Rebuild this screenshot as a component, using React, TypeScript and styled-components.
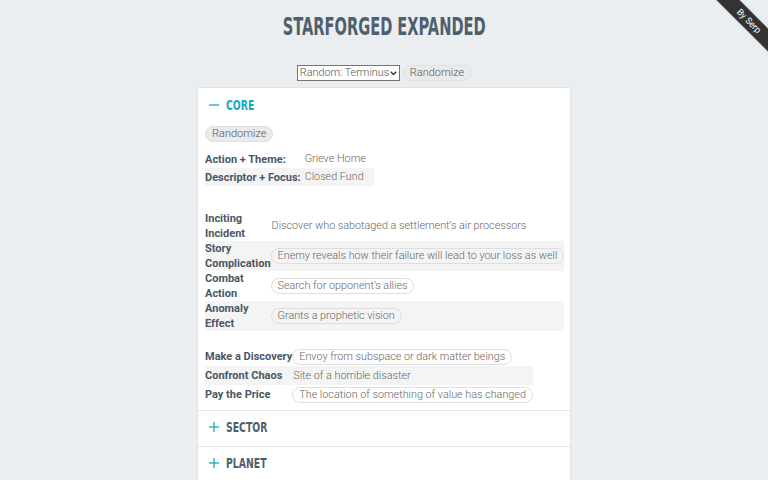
import styled, { createGlobalStyle } from "styled-components";

const GlobalStyle = createGlobalStyle`
  html, body {
    margin: 0;
    padding: 0;
    background: #ebeef1;
    font-family: Roboto, "Liberation Sans", sans-serif;
    overflow: hidden;
  }
`;

const Page = styled.div`
  position: relative;
  width: 768px;
  height: 480px;
  overflow: hidden;
  display: flex;
  flex-direction: column;
  align-items: center;
`;

const Title = styled.h1`
  margin: 15px 0 0;
  height: 24px;
  font-family: "DejaVu Sans Condensed", sans-serif;
  font-weight: 700;
  font-size: 25px;
  line-height: 24px;
  color: #4f5f6d;
  letter-spacing: 0;
  transform: scaleX(0.65);
`;

const Toolbar = styled.div`
  margin-top: 26px;
  display: flex;
  align-items: center;
  gap: 3px;
`;

const SelectWrap = styled.div`
  position: relative;
  display: flex;
`;

const Select = styled.select`
  appearance: none;
  -webkit-appearance: none;
  height: 16px;
  width: 103px;
  padding: 0 9px 0 2px;
  font-family: Roboto, sans-serif;
  font-weight: 300;
  font-size: 10.8px;
  line-height: 14px;
  color: #555;
  border: 1px solid #767676;
  border-radius: 0;
  background: #fff;
`;

const Chevron = styled.svg`
  position: absolute;
  right: 3px;
  top: 6px;
  pointer-events: none;
`;

const PillButton = styled.button`
  height: 16px;
  padding: 0 6px;
  font-family: Roboto, sans-serif;
  font-weight: 300;
  font-size: 11px;
  line-height: 14px;
  color: #555;
  background: #ebebeb;
  border: 1px solid #e0e0e0;
  border-radius: 8px;
`;

const Card = styled.div`
  margin-top: 6px;
  width: 372px;
  background: #fff;
  border: 1px solid #dfe3e7;
  border-bottom: none;
`;

const Section = styled.section<{ $last?: boolean }>`
  border-bottom: ${(p) => (p.$last ? "none" : "1px solid #e3e6ea")};
`;

const Header = styled.div<{ $open?: boolean }>`
  height: ${(p) => (p.$open ? 34 : 35)}px;
  box-sizing: border-box;
  padding-bottom: ${(p) => (p.$open ? 0 : 3)}px;
  display: flex;
  align-items: center;
  gap: 7px;
  padding-left: 11px;
  color: ${(p) => (p.$open ? "#17a9bd" : "#4f5f6d")};
`;

const HeaderText = styled.span`
  display: inline-block;
  font-family: "DejaVu Sans Condensed", sans-serif;
  font-weight: 700;
  font-size: 14px;
  line-height: 16px;
  transform: scaleX(0.74);
  transform-origin: left center;
`;

const Body = styled.div`
  padding: 0 7px 6px 7px;
`;

const Table = styled.table<{ $mt?: number }>`
  border-collapse: collapse;
  margin-top: ${(p) => p.$mt ?? 0}px;
  font-size: 11px;
`;

const Row = styled.tr<{ $shade?: boolean; $h?: number }>`
  background: ${(p) => (p.$shade ? "#f4f4f4" : "transparent")};
  height: ${(p) => p.$h ?? 18}px;
`;

const Label = styled.td<{ $w?: number; $pr?: number }>`
  padding: 0 ${(p) => p.$pr ?? 0}px 0 0;
  width: ${(p) => (p.$w ? `${p.$w}px` : "auto")};
  font-weight: 700;
  color: #4a5866;
  line-height: 15px;
  vertical-align: middle;
  white-space: ${(p) => (p.$w ? "normal" : "nowrap")};
`;

const Value = styled.td`
  padding: 0;
  font-weight: 300;
  font-size: 10.8px;
  color: #666;
  white-space: nowrap;
  vertical-align: middle;
`;

const Plain = styled.span`
  display: inline-block;
  padding: 0 8px 0 1px;
  line-height: 14px;
`;

const Chip = styled.span`
  display: inline-block;
  padding: 0 6px;
  line-height: 14px;
  border: 1px solid #dedede;
  border-radius: 8px;
`;

const Ribbon = styled.div`
  position: absolute;
  top: 13px;
  right: -36px;
  width: 110px;
  height: 16px;
  background: #333;
  color: #fff;
  font-family: Roboto, sans-serif;
  font-size: 9px;
  line-height: 16px;
  text-align: center;
  transform: rotate(45deg);
  box-shadow: 0 0 2px rgba(0, 0, 0, 0.4);
`;

const IconBox = styled.span`
  display: flex;
  color: #17a9bd;
`;

const Icon = ({ plus }: { plus?: boolean }) => (
  <IconBox>
    <svg width="10" height="10" viewBox="0 0 10 10">
      <path d="M0 5H10" stroke="currentColor" strokeWidth="1.3" />
      {plus && <path d="M5 0V10" stroke="currentColor" strokeWidth="1.3" />}
    </svg>
  </IconBox>
);

const Val = ({ text, chip }: { text: string; chip?: boolean }) =>
  chip ? <Chip>{text}</Chip> : <Plain>{text}</Plain>;

const App = () => {
  return (
    <Page>
      <GlobalStyle />
      <Ribbon>By Serp</Ribbon>
      <Title>STARFORGED EXPANDED</Title>
      <Toolbar>
        <SelectWrap>
          <Select defaultValue="terminus">
            <option value="terminus">Random: Terminus</option>
          </Select>
          <Chevron width="7" height="5" viewBox="0 0 7 5">
            <path d="M0.8 0.8L3.5 3.5L6.2 0.8" fill="none" stroke="#333" strokeWidth="1.4" />
          </Chevron>
        </SelectWrap>
        <PillButton>Randomize</PillButton>
      </Toolbar>
      <Card>
        <Section>
          <Header $open>
            <Icon />
            <HeaderText>CORE</HeaderText>
          </Header>
          <Body>
            <PillButton>Randomize</PillButton>
            <Table $mt={8}>
              <tbody>
                <Row>
                  <Label $pr={3}>Action + Theme:</Label>
                  <Value><Val text="Grieve Home" /></Value>
                </Row>
                <Row $shade>
                  <Label $pr={3}>Descriptor + Focus:</Label>
                  <Value><Val text="Closed Fund" /></Value>
                </Row>
              </tbody>
            </Table>
            <Table $mt={25}>
              <tbody>
                <Row $h={30}>
                  <Label $w={66}>Inciting Incident</Label>
                  <Value><Val text="Discover who sabotaged a settlement’s air processors" /></Value>
                </Row>
                <Row $h={30} $shade>
                  <Label $w={66}>Story Complication</Label>
                  <Value><Val chip text="Enemy reveals how their failure will lead to your loss as well" /></Value>
                </Row>
                <Row $h={30}>
                  <Label $w={66}>Combat Action</Label>
                  <Value><Val chip text="Search for opponent’s allies" /></Value>
                </Row>
                <Row $h={30} $shade>
                  <Label $w={66}>Anomaly Effect</Label>
                  <Value><Val chip text="Grants a prophetic vision" /></Value>
                </Row>
              </tbody>
            </Table>
            <Table $mt={16}>
              <tbody>
                <Row $h={19}>
                  <Label>Make a Discovery</Label>
                  <Value><Val chip text="Envoy from subspace or dark matter beings" /></Value>
                </Row>
                <Row $h={19} $shade>
                  <Label>Confront Chaos</Label>
                  <Value><Val text="Site of a horrible disaster" /></Value>
                </Row>
                <Row $h={19}>
                  <Label>Pay the Price</Label>
                  <Value><Val chip text="The location of something of value has changed" /></Value>
                </Row>
              </tbody>
            </Table>
          </Body>
        </Section>
        <Section>
          <Header>
            <Icon plus />
            <HeaderText>SECTOR</HeaderText>
          </Header>
        </Section>
        <Section $last>
          <Header>
            <Icon plus />
            <HeaderText>PLANET</HeaderText>
          </Header>
        </Section>
      </Card>
    </Page>
  );
};

export default App;
